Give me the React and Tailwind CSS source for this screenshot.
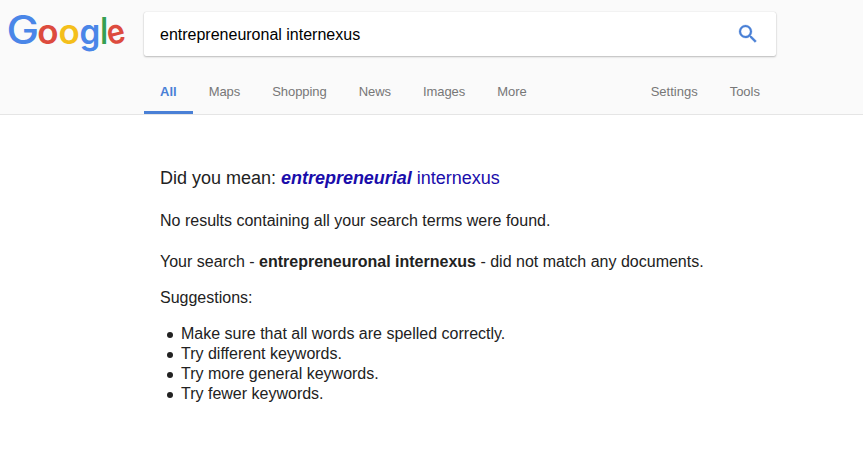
import React from "react";

const tabs = [
  { name: "All", current: true },
  { name: "Maps", current: false },
  { name: "Shopping", current: false },
  { name: "News", current: false },
  { name: "Images", current: false },
  { name: "More", current: false },
];

const tools = ["Settings", "Tools"];

const suggestions = [
  "Make sure that all words are spelled correctly.",
  "Try different keywords.",
  "Try more general keywords.",
  "Try fewer keywords.",
];

const Logo = () => (
  <svg
    className="block h-[56px] w-[144px] shrink-0 font-['Inter',sans-serif] text-[35px] font-semibold"
    viewBox="0 0 144 56"
    aria-label="Google"
  >
    <text
      className="text-[39px] font-medium"
      fill="#4a86e8"
      transform="translate(6.4 44) scale(1.12 1)"
    >
      G
    </text>
    <text y="44">
      <tspan x="37.3" fill="#dd4b3e">o</tspan>
      <tspan x="58.5" fill="#f4bf1b">o</tspan>
    </text>
    <text fill="#4a86e8" transform="translate(79.6 44) scale(0.95 1)">
      g
    </text>
    <text
      className="text-[37px]"
      fill="#34a053"
      transform="translate(100.2 44) scale(0.8 1)"
    >
      l
    </text>
    <text
      className="text-[34px]"
      fill="#dd4b3e"
      transform="translate(109.6 45.4) rotate(-14) scale(0.9 1)"
    >
      e
    </text>
  </svg>
);

const SearchIcon = () => (
  <svg className="h-6 w-6" viewBox="0 0 24 24" fill="#4a80d6">
    <path
      d="M15.5 14h-.79l-.28-.27A6.471 6.471 0 0 0 16 9.5 6.5 6.5 0 1 0 9.5 16c1.61 0 3.09-.59 4.23-1.57l.27.28v.79l5 4.99L20.49 19l-4.99-5zm-6 0C7.01 14 5 11.99 5 9.5S7.01 5 9.5 5 14 7.01 14 9.5 11.99 14 9.5 14z"
      stroke="#4a80d6"
      strokeWidth="0.3"
    />
  </svg>
);

const Header = () => (
  <header className="h-[115px] border-b border-[#e5e5e5] bg-[#fafafa]">
    <div className="flex h-[70px]">
      <Logo />
      <div className="mt-3 flex h-[44px] w-[632px] items-center justify-between rounded-[2px] bg-white pr-4 pl-4 shadow-[0_1px_2px_rgba(0,0,0,0.24),0_0_1px_rgba(0,0,0,0.2)]">
        <span className="pt-0.5 text-base text-black">
          entrepreneuronal internexus
        </span>
        <SearchIcon />
      </div>
    </div>
    <nav className="ml-[144px] flex h-[44px] w-[632px] justify-between text-[13px] leading-[43px] text-[#777]">
      <div className="flex tracking-[-0.06px]">
        {tabs.map((tab) => (
          <a
            key={tab.name}
            className={
              tab.current
                ? "border-b-[3px] border-[#4a80d6] px-4 font-bold tracking-normal text-[#4a80d6]"
                : "px-4"
            }
          >
            {tab.name}
          </a>
        ))}
      </div>
      <div className="flex">
        {tools.map((tool) => (
          <a key={tool} className="px-4">
            {tool}
          </a>
        ))}
      </div>
    </nav>
  </header>
);

const App = () => {
  return (
    <div className="min-h-screen bg-white font-['Liberation_Sans',Arial,sans-serif] text-[#222]">
      <Header />
      <main className="ml-[160px] pt-[51px] text-base leading-5">
        <p className="text-lg leading-6 tracking-[-0.01px]">
          Did you mean:{" "}
          <a className="text-[#1a0dab]">
            <b>
              <i>entrepreneurial</i>
            </b>{" "}
            internexus
          </a>
        </p>
        <p className="mt-[21px]">
          No results containing all your search terms were found.
        </p>
        <p className="mt-[21px]">
          Your search - <b>entrepreneuronal internexus</b> - did not match any
          documents.
        </p>
        <p className="mt-4">Suggestions:</p>
        <ul className="mt-4 pl-[7px]">
          {suggestions.map((suggestion) => (
            <li key={suggestion} className="flex items-center gap-2">
              <span className="mt-0.5 h-1.5 w-1.5 rounded-full bg-[#222]" />
              {suggestion}
            </li>
          ))}
        </ul>
      </main>
    </div>
  );
};

export default App;
